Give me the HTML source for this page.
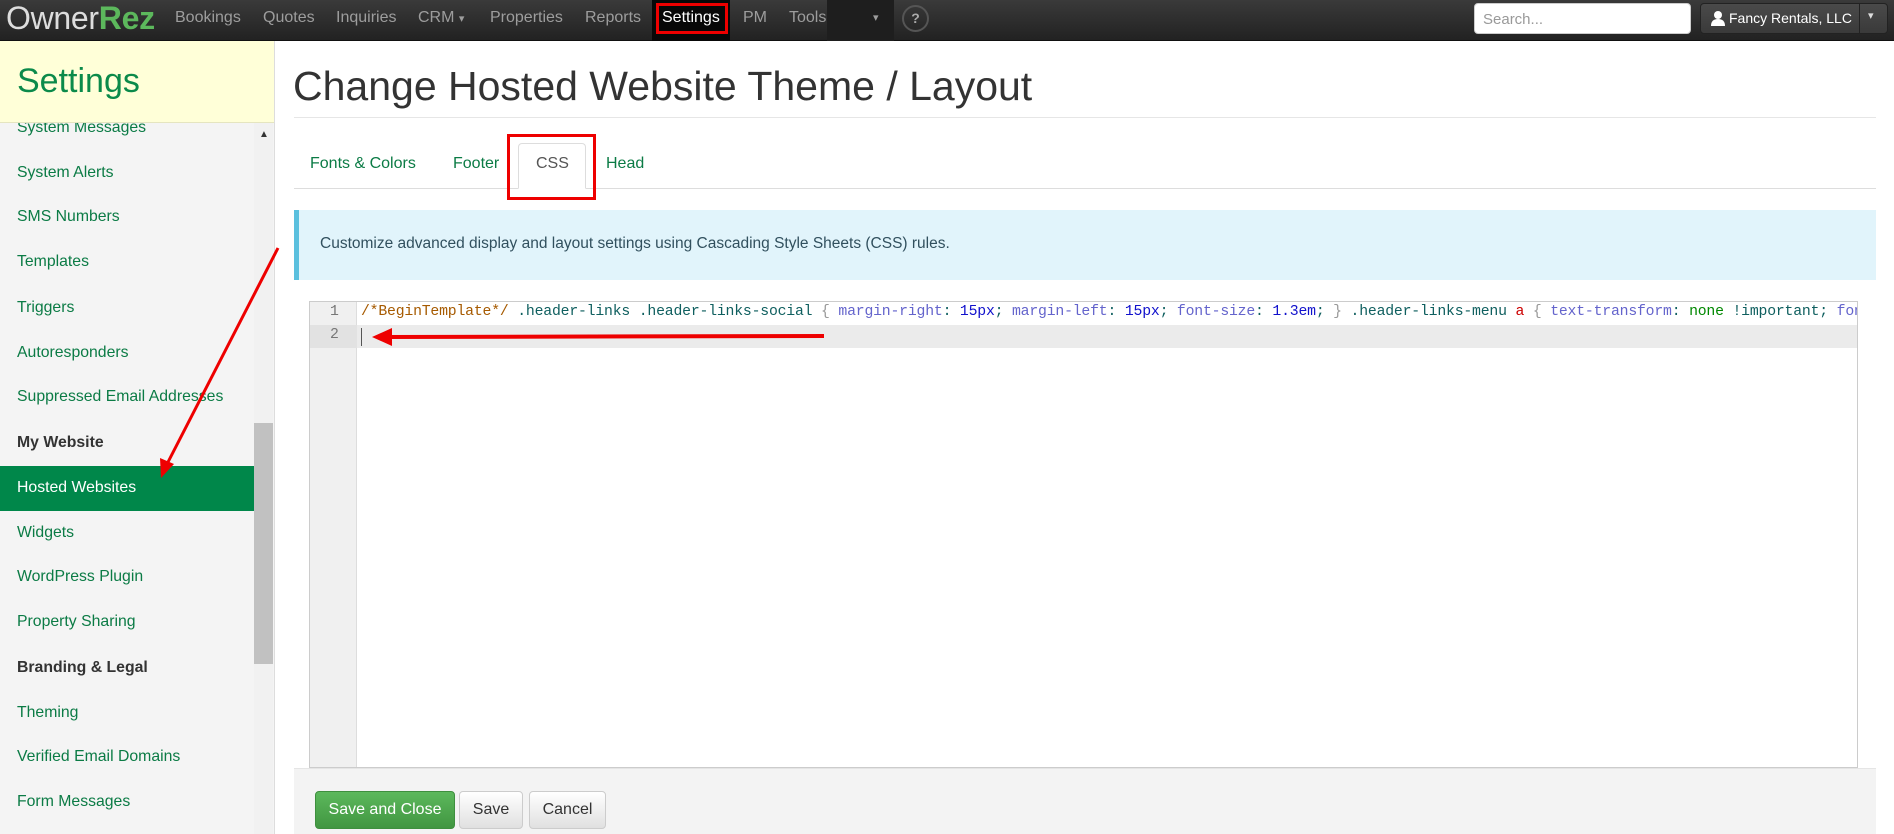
<!DOCTYPE html>
<html><head><meta charset="utf-8"><style>
*{box-sizing:border-box;margin:0;padding:0}
body{width:1894px;height:834px;overflow:hidden;font-family:"Liberation Sans",Arial,sans-serif;background:#fff;position:relative}
.nav{position:absolute;left:0;top:0;width:1894px;height:41px;background:linear-gradient(#3a3a3a,#222);border-bottom:1px solid #111}
.nav .i{position:absolute;top:0;height:41px;line-height:36px;color:#9d9d9d;font-size:16px}
.logo{position:absolute;left:6px;top:0px;font-size:32px;color:#ddd;letter-spacing:-0.3px}
.logo b{color:#5cb85c}
.abs{position:absolute}
.side{position:absolute;left:0;top:41px;width:275px;height:793px;background:#f4f4f4;border-right:1px solid #ddd;overflow:hidden}
.side .it{position:absolute;left:17px;font-size:15.8px;color:#0b7b45;line-height:20px}
.side .b{color:#333;font-weight:bold}
.code{font-family:"Liberation Mono",monospace;font-size:14.8px;white-space:pre;letter-spacing:-0.2px}
.btn{position:absolute;top:791px;height:38px;border:1px solid #ccc;border-radius:4px;background:linear-gradient(#fff,#e0e0e0);font-size:16px;color:#333;text-align:center;line-height:36px}
</style></head><body>
<div class="nav">
<div class="logo">Owner<b>Rez</b></div>
<div class="i" style="left:175px">Bookings</div>
<div class="i" style="left:263px">Quotes</div>
<div class="i" style="left:336px">Inquiries</div>
<div class="i" style="left:418px">CRM <span style="font-size:11px">▾</span></div>
<div class="i" style="left:490px">Properties</div>
<div class="i" style="left:585px">Reports</div>
<div class="abs" style="left:652px;top:0;width:78px;height:41px;background:#080808"></div>
<div class="abs" style="left:656px;top:3px;width:72px;height:31px;border:3px solid #e00"></div>
<div class="i" style="left:662px;color:#fff">Settings</div>
<div class="i" style="left:743px">PM</div>
<div class="i" style="left:789px">Tools</div>
<div class="abs" style="left:827px;top:0;width:67px;height:41px;background:#1e1e1e"></div>
<div class="i" style="left:873px;font-size:11px">▾</div>
<div class="abs" style="left:902px;top:5px;width:27px;height:27px;border:2px solid #555;border-radius:50%;color:#aaa;font-size:14px;font-weight:bold;text-align:center;line-height:23px">?</div>
<div class="abs" style="left:1474px;top:3px;width:217px;height:31px;background:#fff;border-radius:4px;border:1px solid #ccc;font-size:15px;color:#999;padding:7px 8px">Search...</div>
<div class="abs" style="left:1700px;top:3px;width:188px;height:31px;background:linear-gradient(#4a4a4a,#3a3a3a);border:1px solid #222;border-radius:4px;color:#fff;font-size:14px;line-height:29px;padding-left:28px">Fancy Rentals, LLC</div>
<svg class="abs" style="left:1711px;top:10px" width="14" height="16" viewBox="0 0 14 16"><circle cx="7" cy="5" r="4" fill="#fff"/><path d="M0 16 Q0 9 7 9 Q14 9 14 16Z" fill="#fff"/></svg>
<div class="abs" style="left:1859px;top:3px;width:1px;height:31px;background:#222"></div>
<div class="abs" style="left:1868px;top:9px;color:#ddd;font-size:11px">▾</div>
</div>

<div class="side">
<div class="it" style="top:77px">System Messages</div>
<div class="abs" style="left:0;top:0;width:275px;height:82px;background:#ffffd8;border-bottom:1px solid #e5e5c0"></div>
<div class="abs" style="left:17px;top:21px;font-size:34px;color:#0b8a4a">Settings</div>
<div class="abs" style="left:254px;top:82px;width:19px;height:711px;background:#f1f1f1"></div>
<div class="abs" style="left:254px;top:382px;width:19px;height:241px;background:#c1c1c1"></div>
<div class="abs" style="left:259px;top:88px;font-size:10px;color:#333">▲</div>
<div class="it" style="top:122px">System Alerts</div>
<div class="it" style="top:166px">SMS Numbers</div>
<div class="it" style="top:211px">Templates</div>
<div class="it" style="top:257px">Triggers</div>
<div class="it" style="top:302px">Autoresponders</div>
<div class="it" style="top:346px">Suppressed Email Addresses</div>
<div class="it b" style="top:392px">My Website</div>
<div class="abs" style="left:0;top:425px;width:254px;height:45px;background:#00874a"></div>
<div class="it" style="top:437px;color:#fff">Hosted Websites</div>
<div class="it" style="top:482px">Widgets</div>
<div class="it" style="top:526px">WordPress Plugin</div>
<div class="it" style="top:571px">Property Sharing</div>
<div class="it b" style="top:617px">Branding &amp; Legal</div>
<div class="it" style="top:662px">Theming</div>
<div class="it" style="top:706px">Verified Email Domains</div>
<div class="it" style="top:751px">Form Messages</div>
</div>

<div class="abs" style="left:293px;top:63px;font-size:41px;color:#333">Change Hosted Website Theme / Layout</div>
<div class="abs" style="left:294px;top:117px;width:1582px;height:1px;background:#e6e6e6"></div>
<div class="abs" style="left:294px;top:188px;width:1582px;height:1px;background:#ddd"></div>
<div class="abs" style="left:518px;top:143px;width:68px;height:46px;background:#fff;border:1px solid #ddd;border-bottom-color:#fff;border-radius:4px 4px 0 0"></div>
<div class="abs" style="left:310px;top:155px;font-size:16px;color:#0b7b45">Fonts &amp; Colors</div>
<div class="abs" style="left:453px;top:155px;font-size:16px;color:#0b7b45">Footer</div>
<div class="abs" style="left:536px;top:155px;font-size:16px;color:#555">CSS</div>
<div class="abs" style="left:606px;top:155px;font-size:16px;color:#0b7b45">Head</div>
<div class="abs" style="left:507px;top:134px;width:89px;height:66px;border:3px solid #e00"></div>

<div class="abs" style="left:294px;top:210px;width:1582px;height:70px;background:#e1f4fb;border-left:5px solid #5bc0de"></div>
<div class="abs" style="left:320px;top:235px;font-size:15.5px;color:#31505e">Customize advanced display and layout settings using Cascading Style Sheets (CSS) rules.</div>

<div class="abs" style="left:309px;top:301px;width:1549px;height:467px;border:1px solid #ccc;background:#fff;overflow:hidden">
<div class="abs" style="left:0;top:0;width:47px;height:467px;background:#f0f0f0;border-right:1px solid #ddd"></div>
<div class="abs" style="left:47px;top:23px;width:1502px;height:23px;background:#ebebeb"></div>
<div class="abs" style="left:0;top:23px;width:47px;height:23px;background:#e2e2e2"></div>
<div class="abs code" style="left:20px;top:2px;color:#777">1</div>
<div class="abs code" style="left:20px;top:25px;color:#777">2</div>
<div class="abs" style="left:51px;top:26px;width:1px;height:18px;background:#555"></div>
<div class="abs code" style="left:51px;top:2px;color:#0f5f5f"><span style="color:#a65a00">/*BeginTemplate*/</span> .header-links .header-links-social <span style="color:#999">{</span> <span style="color:#6464cc">margin-right</span>: <span style="color:#1111cc">15px</span>; <span style="color:#6464cc">margin-left</span>: <span style="color:#1111cc">15px</span>; <span style="color:#6464cc">font-size</span>: <span style="color:#1111cc">1.3em</span>; <span style="color:#999">}</span> .header-links-menu <span style="color:#c00">a</span> <span style="color:#999">{</span> <span style="color:#6464cc">text-transform</span>: <span style="color:#080">none</span> !important; <span style="color:#6464cc">font-weight</span></div>
</div>

<div class="abs" style="left:294px;top:768px;width:1582px;height:66px;background:#f3f3f3;border-top:1px solid #e5e5e5"></div>
<div class="btn" style="left:315px;width:140px;background:linear-gradient(#5cb85c,#419641);border-color:#3e8f3e;color:#fff">Save and Close</div>
<div class="btn" style="left:459px;width:64px">Save</div>
<div class="btn" style="left:529px;width:77px">Cancel</div>

<svg class="abs" style="left:0;top:0" width="1894" height="834">
<line x1="278" y1="248" x2="166" y2="466" stroke="#e00" stroke-width="3"/>
<polygon points="161,478 160,458 174,464" fill="#e00"/>
<line x1="824" y1="336" x2="386" y2="337" stroke="#e00" stroke-width="4"/>
<polygon points="372,337 392,328 392,346" fill="#e00"/>
</svg>
</body></html>
